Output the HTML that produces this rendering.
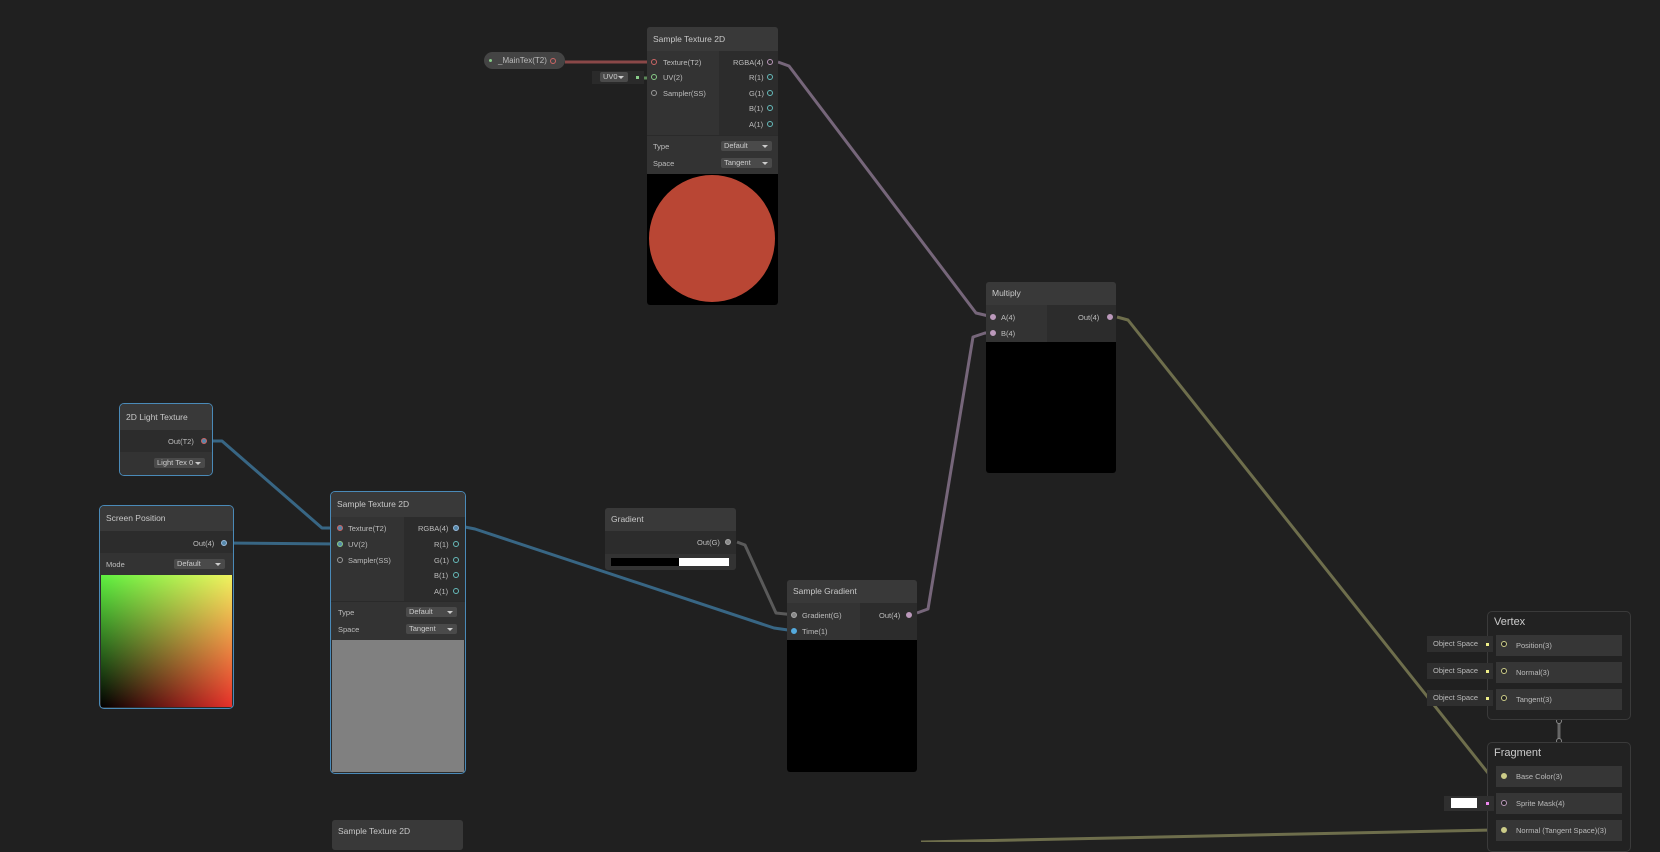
<!DOCTYPE html>
<html><head><meta charset="utf-8"><style>
*{box-sizing:border-box;margin:0;padding:0}
body{width:1660px;height:842px;overflow:hidden;background:#202020;font-family:"Liberation Sans",sans-serif;color:#c2c2c2;font-size:8px;position:relative}
.a{position:absolute}
.node{position:absolute;background:#2c2c2c;border-radius:3px;overflow:hidden}
.sel{outline:1.5px solid #4a8ab8;outline-offset:0;border-radius:4px}
.hdr{position:absolute;left:0;right:0;top:0;background:#393939;color:#c8c8c8;font-size:8.5px;padding-left:6px}
.t{position:absolute;white-space:nowrap;font-size:7.5px;color:#bdbdbd}
.p{position:absolute;width:6px;height:6px;border-radius:50%;border:1px solid #8ab;}
.dd{position:absolute;background:#4a4a4a;border-radius:2px;font-size:7.5px;color:#ccc;padding-left:3px;line-height:10px;height:10px}
.dd:after{content:"";position:absolute;right:4px;top:4px;border-left:3px solid transparent;border-right:3px solid transparent;border-top:3px solid #ccc}
.row{position:absolute;background:#363636;left:9px;right:9px;height:21px;font-size:7.5px;color:#bbb;padding-left:20px;line-height:21px}
.os{position:absolute;background:#2f2f2f;color:#bbb;font-size:7.5px;line-height:16px;padding-left:6px;width:66px;height:16px}
</style></head><body>

<svg class="a" style="left:0;top:0" width="1660" height="842" fill="none" stroke-linejoin="round">
<path d="M565 62 L653 62" stroke="#8a4848" stroke-width="3"/>
<path d="M636 78 L653 78" stroke="#5e8a5a" stroke-width="3"/>
<path d="M778 62 L789 66 L976 313 L993 317" stroke="#76667a" stroke-width="3"/>
<path d="M917 613 L928 609 L973 337 L985 333 L993 333" stroke="#76667a" stroke-width="3"/>
<path d="M1117 317 L1128 320 L1488 773 L1501 776" stroke="#6e6e4c" stroke-width="3"/>
<path d="M921 842 L1493 830" stroke="#6e6e4c" stroke-width="3"/>
<path d="M737 542 L745 545 L776 613 L795 615" stroke="#5a5a5a" stroke-width="3"/>
<path d="M213 441 L222 441 L322 528 L339 528" stroke="#386684" stroke-width="3"/>
<path d="M224 543 L339 544" stroke="#386684" stroke-width="3"/>
<path d="M465 527 L475 529 L774 628 L795 631" stroke="#386684" stroke-width="3"/>
<path d="M1559 722 L1559 740" stroke="#666" stroke-width="3"/>
<circle cx="1559" cy="721" r="2.5" stroke="#888" fill="#202020"/>
<circle cx="1559" cy="741" r="2.5" stroke="#888" fill="#202020"/>
<path d="M1480 644 L1500 644 M1480 671 L1500 671 M1480 698 L1500 698" stroke="#6e6e4c" stroke-width="3"/>
<path d="M1480 803 L1500 803" stroke="#76667a" stroke-width="3"/>
</svg>

<div class="a" style="left:484px;top:52px;width:81px;height:17px;border-radius:9px;background:#444"></div>
<div class="a" style="left:489px;top:59px;width:3px;height:3px;background:#8c8;border-radius:50%"></div>
<div class="t" style="left:498px;top:56px;font-size:8px">_MainTex(T2)</div>
<div class="p" style="left:550px;top:58px;border-color:#c66"></div>
<div class="a" style="left:592px;top:71px;width:52px;height:13px;background:#2a2a2a"></div>
<div class="dd" style="left:600px;top:72px;width:28px">UV0</div>
<div class="a" style="left:636px;top:76px;width:3px;height:3px;background:#8c8"></div>

<div class="node" style="left:647px;top:27px;width:131px;height:278px">
 <div class="hdr" style="height:24px;line-height:24px">Sample Texture 2D</div>
 <div class="a" style="left:0;top:24px;width:72px;height:84px;background:#333"></div>
 <div class="a" style="left:0;top:108px;width:131px;height:39px;background:#333;border-top:1px solid #2a2a2a"></div>
 <div class="a" style="left:0;top:147px;width:131px;height:131px;background:#000"></div>
 <div class="a" style="left:2px;top:148px;width:126px;height:127px;border-radius:50%;background:#b94634"></div>
</div>
<div class="p" style="left:651px;top:59px;border-color:#c66"></div><div class="t" style="left:663px;top:58px">Texture(T2)</div>
<div class="p" style="left:651px;top:74px;border-color:#8c8"></div><div class="t" style="left:663px;top:73px">UV(2)</div>
<div class="p" style="left:651px;top:90px;border-color:#999"></div><div class="t" style="left:663px;top:89px">Sampler(SS)</div>
<div class="t" style="left:733px;top:58px">RGBA(4)</div><div class="p" style="left:767px;top:59px;border-color:#b9b"></div>
<div class="t" style="left:749px;top:73px">R(1)</div><div class="p" style="left:767px;top:74px;border-color:#6bb"></div>
<div class="t" style="left:749px;top:89px">G(1)</div><div class="p" style="left:767px;top:90px;border-color:#6bb"></div>
<div class="t" style="left:749px;top:104px">B(1)</div><div class="p" style="left:767px;top:105px;border-color:#6bb"></div>
<div class="t" style="left:749px;top:120px">A(1)</div><div class="p" style="left:767px;top:121px;border-color:#6bb"></div>
<div class="t" style="left:653px;top:142px">Type</div><div class="dd" style="left:721px;top:141px;width:51px">Default</div>
<div class="t" style="left:653px;top:159px">Space</div><div class="dd" style="left:721px;top:158px;width:51px">Tangent</div>

<div class="node" style="left:986px;top:282px;width:130px;height:191px">
 <div class="hdr" style="height:23px;line-height:23px">Multiply</div>
 <div class="a" style="left:0;top:23px;width:61px;height:37px;background:#333"></div>
 <div class="a" style="left:0;top:60px;width:130px;height:131px;background:#000"></div>
</div>
<div class="p" style="left:990px;top:314px;border-color:#b9b;background:#b9b"></div><div class="t" style="left:1001px;top:313px">A(4)</div>
<div class="p" style="left:990px;top:330px;border-color:#b9b;background:#b9b"></div><div class="t" style="left:1001px;top:329px">B(4)</div>
<div class="t" style="left:1078px;top:313px">Out(4)</div><div class="p" style="left:1107px;top:314px;border-color:#b9b;background:#b9b"></div>

<div class="node sel" style="left:120px;top:404px;width:92px;height:71px">
 <div class="hdr" style="height:26px;line-height:26px">2D Light Texture</div>
 <div class="a" style="left:0;top:48px;width:92px;height:23px;background:#333"></div>
</div>
<div class="t" style="left:168px;top:437px">Out(T2)</div><div class="p" style="left:201px;top:438px;border-color:#c66;background:#58a"></div>
<div class="dd" style="left:154px;top:458px;width:51px">Light Tex 0</div>

<div class="node sel" style="left:100px;top:506px;width:133px;height:202px">
 <div class="hdr" style="height:25px;line-height:25px">Screen Position</div>
 <div class="a" style="left:0;top:47px;width:133px;height:22px;background:#333"></div>
 <div class="a" style="left:1px;top:69px;width:131px;height:132px;background:linear-gradient(to bottom,#5ef040,#000),linear-gradient(to right,#000,#e8302a);background-blend-mode:screen"></div>
</div>
<div class="t" style="left:193px;top:539px">Out(4)</div><div class="p" style="left:221px;top:540px;border-color:#9bd;background:#58a"></div>
<div class="t" style="left:106px;top:560px">Mode</div><div class="dd" style="left:174px;top:559px;width:51px">Default</div>

<div class="node sel" style="left:331px;top:492px;width:134px;height:281px">
 <div class="hdr" style="height:25px;line-height:25px">Sample Texture 2D</div>
 <div class="a" style="left:0;top:25px;width:73px;height:84px;background:#333"></div>
 <div class="a" style="left:0;top:109px;width:134px;height:39px;background:#333;border-top:1px solid #2a2a2a"></div>
 <div class="a" style="left:1px;top:148px;width:132px;height:132px;background:#808080"></div>
</div>
<div class="p" style="left:337px;top:525px;border-color:#c66;background:#58a"></div><div class="t" style="left:348px;top:524px">Texture(T2)</div>
<div class="p" style="left:337px;top:541px;border-color:#8c8;background:#58a"></div><div class="t" style="left:348px;top:540px">UV(2)</div>
<div class="p" style="left:337px;top:557px;border-color:#999"></div><div class="t" style="left:348px;top:556px">Sampler(SS)</div>
<div class="t" style="left:418px;top:524px">RGBA(4)</div><div class="p" style="left:453px;top:525px;border-color:#9bd;background:#58a"></div>
<div class="t" style="left:434px;top:540px">R(1)</div><div class="p" style="left:453px;top:541px;border-color:#6bb"></div>
<div class="t" style="left:434px;top:556px">G(1)</div><div class="p" style="left:453px;top:557px;border-color:#6bb"></div>
<div class="t" style="left:434px;top:571px">B(1)</div><div class="p" style="left:453px;top:572px;border-color:#6bb"></div>
<div class="t" style="left:434px;top:587px">A(1)</div><div class="p" style="left:453px;top:588px;border-color:#6bb"></div>
<div class="t" style="left:338px;top:608px">Type</div><div class="dd" style="left:406px;top:607px;width:51px">Default</div>
<div class="t" style="left:338px;top:625px">Space</div><div class="dd" style="left:406px;top:624px;width:51px">Tangent</div>

<div class="node" style="left:605px;top:508px;width:131px;height:62px">
 <div class="hdr" style="height:23px;line-height:23px">Gradient</div>
 <div class="a" style="left:0;top:46px;width:131px;height:16px;background:#333"></div>
 <div class="a" style="left:6px;top:50px;width:68px;height:8px;background:#000"></div>
 <div class="a" style="left:74px;top:50px;width:50px;height:8px;background:#fff"></div>
</div>
<div class="t" style="left:697px;top:538px">Out(G)</div><div class="p" style="left:725px;top:539px;border-color:#aaa;background:#888"></div>

<div class="node" style="left:787px;top:580px;width:130px;height:192px">
 <div class="hdr" style="height:23px;line-height:23px">Sample Gradient</div>
 <div class="a" style="left:0;top:23px;width:73px;height:37px;background:#333"></div>
 <div class="a" style="left:0;top:60px;width:130px;height:132px;background:#000"></div>
</div>
<div class="p" style="left:791px;top:612px;border-color:#aaa;background:#888"></div><div class="t" style="left:802px;top:611px">Gradient(G)</div>
<div class="p" style="left:791px;top:628px;border-color:#5ad;background:#5ad"></div><div class="t" style="left:802px;top:627px">Time(1)</div>
<div class="t" style="left:879px;top:611px">Out(4)</div><div class="p" style="left:906px;top:612px;border-color:#b9b;background:#b9b"></div>

<div class="node" style="left:332px;top:820px;width:131px;height:30px">
 <div class="hdr" style="height:30px;line-height:22px">Sample Texture 2D</div>
</div>

<div class="a" style="left:1487px;top:611px;width:144px;height:109px;border:1px solid #3a3a3a;border-radius:5px;background:#222"></div>
<div class="a" style="left:1494px;top:616px;font-size:11px;color:#ccc">Vertex</div>
<div class="row" style="left:1496px;width:126px;top:635px">Position(3)</div>
<div class="row" style="left:1496px;width:126px;top:662px">Normal(3)</div>
<div class="row" style="left:1496px;width:126px;top:689px">Tangent(3)</div>
<div class="os" style="left:1427px;top:636px">Object Space</div>
<div class="os" style="left:1427px;top:663px">Object Space</div>
<div class="os" style="left:1427px;top:690px">Object Space</div>
<div class="a" style="left:1486px;top:643px;width:3px;height:3px;background:#ee8"></div>
<div class="a" style="left:1486px;top:670px;width:3px;height:3px;background:#ee8"></div>
<div class="a" style="left:1486px;top:697px;width:3px;height:3px;background:#ee8"></div>
<div class="p" style="left:1501px;top:641px;border-color:#cc8;background:#222"></div>
<div class="p" style="left:1501px;top:668px;border-color:#cc8;background:#222"></div>
<div class="p" style="left:1501px;top:695px;border-color:#cc8;background:#222"></div>

<div class="a" style="left:1487px;top:742px;width:144px;height:110px;border:1px solid #3a3a3a;border-radius:5px;background:#222"></div>
<div class="a" style="left:1494px;top:747px;font-size:11px;color:#ccc">Fragment</div>
<div class="row" style="left:1496px;width:126px;top:766px">Base Color(3)</div>
<div class="row" style="left:1496px;width:126px;top:793px">Sprite Mask(4)</div>
<div class="row" style="left:1496px;width:126px;top:820px">Normal (Tangent Space)(3)</div>
<div class="p" style="left:1501px;top:773px;border-color:#cc8;background:#cc8"></div>
<div class="p" style="left:1501px;top:800px;border-color:#b9b;background:#222"></div>
<div class="p" style="left:1501px;top:827px;border-color:#cc8;background:#cc8"></div>
<div class="a" style="left:1444px;top:796px;width:50px;height:15px;background:#2f2f2f"></div>
<div class="a" style="left:1451px;top:798px;width:26px;height:10px;background:#fff"></div>
<div class="a" style="left:1486px;top:802px;width:3px;height:3px;background:#e8e"></div>
</body></html>
